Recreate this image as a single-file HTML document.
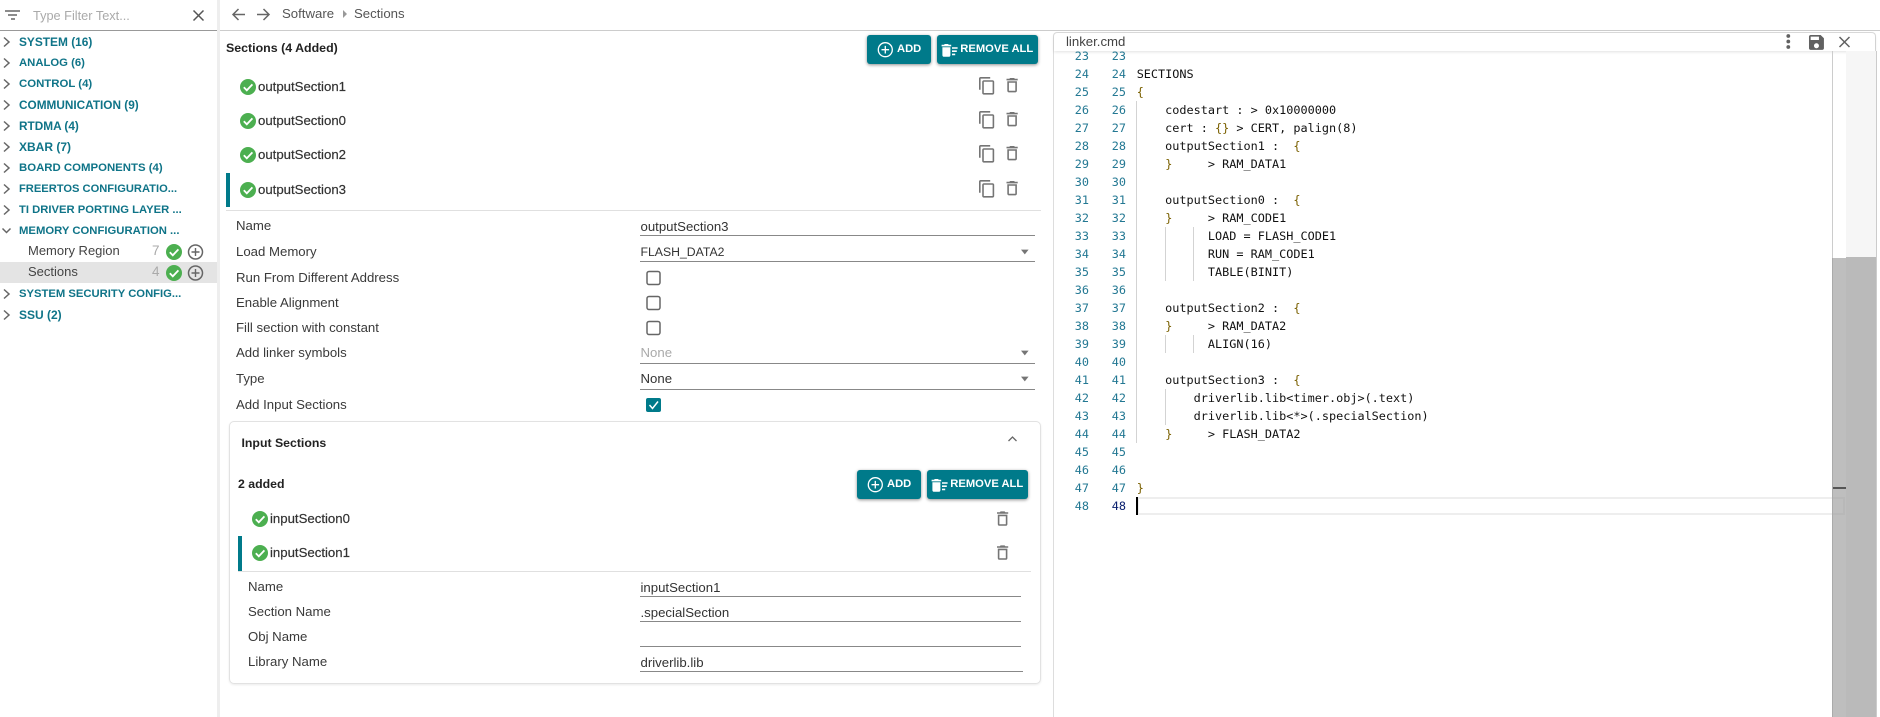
<!DOCTYPE html>
<html><head><meta charset="utf-8"><title>Sections</title>
<style>
html,body{margin:0;padding:0;width:1880px;height:717px;overflow:hidden;background:#fff;font-family:"Liberation Sans",sans-serif;color:#333}
#w{position:relative;width:1880px;height:717px;overflow:hidden}
.a{position:absolute}
.t{position:absolute;line-height:20px;height:20px;white-space:pre;font-size:13px}
.tr{font-size:11.4px;font-weight:bold;color:#0f7488;left:19px}
.lb{font-size:13.2px;color:#3a3a3a}
.v{font-size:13.2px;color:#333}
.n{font-size:13.2px;color:#333;-webkit-text-stroke:.2px #333}
.b{font-weight:bold;color:#222}
.ul{position:absolute;height:1px;background:#888}
.btn{position:absolute;height:29px;background:#007a8a;border-radius:3px;box-shadow:0 1px 3px rgba(0,0,0,.45)}
.bt{position:absolute;color:#fff;font-weight:bold;font-size:11.2px;line-height:20px;white-space:pre}
pre{margin:0;position:absolute;font-family:"DejaVu Sans Mono","Liberation Mono",monospace;font-size:11.83px;line-height:18px}
i{font-style:normal;color:#7a6000}
</style></head><body>
<div id="w">

<!-- structure -->
<div class="a" style="left:217px;top:0;width:3px;height:717px;background:#eee"></div>
<div class="a" style="left:0;top:30px;width:217px;height:1px;background:#999"></div>
<div class="a" style="left:220px;top:30px;width:1660px;height:1px;background:#ccc"></div>
<div class="a" style="left:0;top:262px;width:217px;height:21px;background:#e4e4e4"></div>

<!-- code panel -->
<div class="a" style="left:1053px;top:32px;width:823px;height:685px;border:1px solid #ddd;border-bottom:0;border-radius:4px 4px 0 0;box-sizing:border-box"></div>
<div class="a" style="left:1054px;top:33px;width:821px;height:18px;background:#fff;box-shadow:0 1px 3px rgba(0,0,0,.12);border-radius:4px 4px 0 0"></div>
<div class="a" style="left:1137px;top:497px;width:708px;height:18px;border:2px solid #eee;box-sizing:border-box"></div>
<div class="a" style="left:1136px;top:497px;width:2px;height:18px;background:#000"></div>
<div class="a" style="left:1136px;top:101px;width:1px;height:342px;background:#d3d3d3"></div>
<div class="a" style="left:1165px;top:227px;width:1px;height:54px;background:#d3d3d3"></div>
<div class="a" style="left:1193px;top:227px;width:1px;height:54px;background:#d3d3d3"></div>
<div class="a" style="left:1165px;top:335px;width:1px;height:18px;background:#d3d3d3"></div>
<div class="a" style="left:1193px;top:335px;width:1px;height:18px;background:#d3d3d3"></div>
<div class="a" style="left:1165px;top:389px;width:1px;height:36px;background:#d3d3d3"></div>
<div class="a" style="left:1832px;top:51px;width:1px;height:666px;background:#ccc"></div>
<div class="a" style="left:1846px;top:51px;width:30px;height:206px;background:#f6f6f6"></div>
<div class="a" style="left:1832px;top:258px;width:14px;height:459px;background:rgba(150,150,150,.62);border-left:1px solid #aaa;box-sizing:border-box"></div>
<div class="a" style="left:1846px;top:257px;width:30px;height:460px;background:#bababa"></div>
<div class="a" style="left:1876px;top:51px;width:1px;height:666px;background:#ccc"></div>
<div class="a" style="left:1833px;top:487px;width:13px;height:2px;background:#555"></div>

<pre style="left:1060px;top:47px;width:29px;text-align:right;color:#237893">23
24
25
26
27
28
29
30
31
32
33
34
35
36
37
38
39
40
41
42
43
44
45
46
47
48</pre>
<pre style="left:1097px;top:47px;width:29px;text-align:right;color:#237893">23
24
25
26
27
28
29
30
31
32
33
34
35
36
37
38
39
40
41
42
43
44
45
46
47
<span style="color:#0b216f">48</span></pre>
<pre style="left:1136.7px;top:47px;color:#111">

SECTIONS
<i>{</i>
    codestart : &gt; 0x10000000
    cert : <i>{}</i> &gt; CERT, palign(8)
    outputSection1 :  <i>{</i>
    <i>}</i>     &gt; RAM_DATA1

    outputSection0 :  <i>{</i>
    <i>}</i>     &gt; RAM_CODE1
          LOAD = FLASH_CODE1
          RUN = RAM_CODE1
          TABLE(BINIT)

    outputSection2 :  <i>{</i>
    <i>}</i>     &gt; RAM_DATA2
          ALIGN(16)

    outputSection3 :  <i>{</i>
        driverlib.lib&lt;timer.obj&gt;(.text)
        driverlib.lib&lt;*&gt;(.specialSection)
    <i>}</i>     &gt; FLASH_DATA2


<i>}</i></pre>
<div class="t" style="left:1066px;top:32px;font-size:13.2px;color:#444">linker.cmd</div>

<!-- input box -->
<div class="a" style="left:229px;top:421px;width:812px;height:263px;border:1px solid #e2e2e2;border-radius:5px;box-sizing:border-box;box-shadow:0 1px 2px rgba(0,0,0,.08)"></div>

<!-- buttons -->
<div class="btn" style="left:867px;top:35px;width:64px"></div>
<div class="btn" style="left:937px;top:35px;width:101px"></div>
<div class="btn" style="left:857px;top:470px;width:64px"></div>
<div class="btn" style="left:927px;top:470px;width:101px"></div>
<div class="bt" style="left:897px;top:39px">ADD</div>
<div class="bt" style="left:960.3px;top:39px">REMOVE ALL</div>
<div class="bt" style="left:887px;top:474px">ADD</div>
<div class="bt" style="left:950.3px;top:474px">REMOVE ALL</div>

<!-- selected bars and dividers -->
<div class="a" style="left:226px;top:173px;width:4px;height:34px;background:#007a8a"></div>
<div class="a" style="left:226px;top:210px;width:815px;height:1px;background:#e0e0e0"></div>
<div class="a" style="left:238px;top:536px;width:4px;height:35px;background:#007a8a"></div>
<div class="a" style="left:238px;top:571px;width:793px;height:1px;background:#e0e0e0"></div>

<!-- underlines -->
<div class="ul" style="left:640px;top:235px;width:395px"></div>
<div class="ul" style="left:640px;top:261px;width:395px"></div>
<div class="ul" style="left:640px;top:363px;width:395px"></div>
<div class="ul" style="left:640px;top:389px;width:395px"></div>
<div class="ul" style="left:640px;top:596px;width:381px"></div>
<div class="ul" style="left:640px;top:621px;width:381px"></div>
<div class="ul" style="left:640px;top:646px;width:381px"></div>
<div class="ul" style="left:640px;top:671px;width:383px"></div>

<!-- icons -->
<svg class="a" style="left:0;top:0" width="1880" height="717" viewBox="0 0 1880 717">
<defs>
<g id="ck"><circle r="8" fill="#4caf50"/><path d="M-4.2 .3L-1.2 3.3L4.4 -2.6" fill="none" stroke="#fff" stroke-width="1.8"/></g>
<g id="pl"><circle r="7" fill="none" stroke="#666" stroke-width="1.5"/><path d="M-4 0H4M0 -4V4" stroke="#666" stroke-width="1.4"/></g>
<g id="wp"><circle r="7" fill="none" stroke="#fff" stroke-width="1.3"/><path d="M-3.8 0H3.8M0 -3.8V3.8" stroke="#fff" stroke-width="1.3"/></g>
<path id="cp" transform="scale(.8)" fill="#757575" d="M16 1H4c-1.1 0-2 .9-2 2v14h2V3h12V1zm3 4H8c-1.1 0-2 .9-2 2v14c0 1.1.9 2 2 2h11c1.1 0 2-.9 2-2V7c0-1.1-.9-2-2-2zm0 16H8V7h11v14z"/>
<path id="tr" transform="scale(.8)" fill="#757575" d="M6 19c0 1.1.9 2 2 2h8c1.1 0 2-.9 2-2V7H6v12zM8 9h8v10H8V9zm7.5-5l-1-1h-5l-1 1H5v2h14V4h-3.5z"/>
<path id="ds" transform="scale(.8)" fill="#fff" d="M15 16h4v2h-4zm0-8h7v2h-7zm0 4h6v2h-6zM3 18c0 1.1.9 2 2 2h6c1.1 0 2-.9 2-2V8H3v10zM14 5h-3l-1-1H6L5 5H2v2h12z"/>
<path id="cv" d="M-2.5 -4.5L2.5 0L-2.5 4.5" fill="none" stroke="#666" stroke-width="1.5"/>
<path id="dn" d="M0 -2.5L8 -2.5L4 2.5Z" fill="#757575" transform="translate(-4,0) scale(.95)"/>
</defs>
<!-- filter -->
<path d="M5 11H20M8 15H17M11 19H15" stroke="#666" stroke-width="1.4"/>
<path d="M193.5 10.5L203.5 20.5M203.5 10.5L193.5 20.5" stroke="#555" stroke-width="1.5"/>
<!-- nav -->
<path d="M245 14.5H233M238.5 9L233 14.5L238.5 20" fill="none" stroke="#666" stroke-width="1.5"/>
<path d="M257 14.5H269M263.5 9L269 14.5L263.5 20" fill="none" stroke="#666" stroke-width="1.5"/>
<path d="M343 10L347 14L343 18Z" fill="#999"/>
<!-- tree chevrons -->
<use href="#cv" x="6.5" y="42"/><use href="#cv" x="6.5" y="63"/><use href="#cv" x="6.5" y="84"/><use href="#cv" x="6.5" y="105"/><use href="#cv" x="6.5" y="126"/><use href="#cv" x="6.5" y="147"/><use href="#cv" x="6.5" y="168"/><use href="#cv" x="6.5" y="189"/><use href="#cv" x="6.5" y="210"/>
<path d="M2.5 228.5L6.5 232.5L10.5 228.5" fill="none" stroke="#666" stroke-width="1.5"/>
<use href="#cv" x="6.5" y="294"/><use href="#cv" x="6.5" y="315"/>
<use href="#ck" x="174" y="252"/><use href="#pl" x="195.5" y="252"/>
<use href="#ck" x="174" y="273"/><use href="#pl" x="195.5" y="273"/>
<!-- list checks -->
<use href="#ck" x="248" y="87"/><use href="#ck" x="248" y="121"/><use href="#ck" x="248" y="155"/><use href="#ck" x="248" y="190"/>
<use href="#ck" x="260" y="519"/><use href="#ck" x="260" y="553"/>
<!-- copy/trash -->
<use href="#cp" x="977.4" y="76.2"/><use href="#cp" x="977.4" y="110.2"/><use href="#cp" x="977.4" y="144.2"/><use href="#cp" x="977.4" y="179.2"/>
<use href="#tr" x="1002.5" y="75.6"/><use href="#tr" x="1002.5" y="109.6"/><use href="#tr" x="1002.5" y="143.6"/><use href="#tr" x="1002.5" y="178.6"/>
<use href="#tr" x="993" y="509"/><use href="#tr" x="993" y="543"/>
<!-- button icons -->
<use href="#wp" x="885.3" y="49.7"/><use href="#ds" x="940" y="40.8"/>
<use href="#wp" x="875.3" y="484.7"/><use href="#ds" x="930" y="475.8"/>
<!-- dropdown arrows -->
<use href="#dn" x="1025" y="252"/><use href="#dn" x="1025" y="353"/><use href="#dn" x="1025" y="379"/>
<!-- checkboxes -->
<rect x="647" y="271.5" width="13" height="13" rx="2" fill="#fff" stroke="#666" stroke-width="1.5"/>
<rect x="647" y="296.5" width="13" height="13" rx="2" fill="#fff" stroke="#666" stroke-width="1.5"/>
<rect x="647" y="321.5" width="13" height="13" rx="2" fill="#fff" stroke="#666" stroke-width="1.5"/>
<rect x="646" y="398" width="15" height="14" rx="2" fill="#007a8a"/>
<path d="M649.5 405L652.5 408.5L658 401.5" fill="none" stroke="#fff" stroke-width="1.5"/>
<!-- chevron up -->
<path d="M1008.5 441L1012.5 437L1016.5 441" fill="none" stroke="#666" stroke-width="1.3"/>
<!-- toolbar icons -->
<circle cx="1788.3" cy="36" r="1.9" fill="#616161"/><circle cx="1788.3" cy="41.5" r="1.9" fill="#616161"/><circle cx="1788.3" cy="47" r="1.9" fill="#616161"/>
<path transform="translate(1806.5 32.5) scale(.83)" fill="#616161" d="M17 3H5c-1.11 0-2 .9-2 2v14c0 1.1.89 2 2 2h14c1.1 0 2-.9 2-2V7l-4-4zm-5 16c-1.66 0-3-1.34-3-3s1.34-3 3-3 3 1.34 3 3-1.34 3-3 3zm3-10H5V5h10v4z"/>
<path d="M1839.5 37L1849.5 47M1849.5 37L1839.5 47" stroke="#616161" stroke-width="1.5"/>
</svg>

<!-- top bar text -->
<div class="t" style="left:33px;top:5.5px;font-size:12.75px;color:#aaa">Type Filter Text...</div>
<div class="t" style="left:282px;top:3.5px;font-size:13.2px;color:#555">Software</div>
<div class="t" style="left:354px;top:3.5px;font-size:13.2px;color:#555">Sections</div>

<!-- tree -->
<div class="t tr" style="top:32px;font-size:11.9px">SYSTEM (16)</div>
<div class="t tr" style="top:53px;font-size:11.3px">ANALOG (6)</div>
<div class="t tr" style="top:74px;font-size:11.4px">CONTROL (4)</div>
<div class="t tr" style="top:95px;font-size:11.8px">COMMUNICATION (9)</div>
<div class="t tr" style="top:116px;font-size:11.8px">RTDMA (4)</div>
<div class="t tr" style="top:137px;font-size:12px">XBAR (7)</div>
<div class="t tr" style="top:158px;font-size:11.4px">BOARD COMPONENTS (4)</div>
<div class="t tr" style="top:179px;font-size:11.15px">FREERTOS CONFIGURATIO...</div>
<div class="t tr" style="top:200px;font-size:11.25px">TI DRIVER PORTING LAYER ...</div>
<div class="t tr" style="top:221px;font-size:11.3px">MEMORY CONFIGURATION ...</div>
<div class="t" style="left:28px;top:241px;color:#444">Memory Region</div>
<div class="t" style="left:152px;top:241px;color:#aaa;font-size:13.5px">7</div>
<div class="t" style="left:28px;top:262px;color:#444">Sections</div>
<div class="t" style="left:152px;top:262px;color:#aaa;font-size:13.5px">4</div>
<div class="t tr" style="top:284px;font-size:11.25px">SYSTEM SECURITY CONFIG...</div>
<div class="t tr" style="top:305px;font-size:12px">SSU (2)</div>

<!-- main -->
<div class="t b" style="left:226px;top:38px;font-size:12.4px">Sections (4 Added)</div>
<div class="t n" style="left:258px;top:77px">outputSection1</div>
<div class="t n" style="left:258px;top:111px">outputSection0</div>
<div class="t n" style="left:258px;top:145px">outputSection2</div>
<div class="t n" style="left:258px;top:180px">outputSection3</div>

<div class="t lb" style="left:236px;top:216px">Name</div>
<div class="t lb" style="left:236px;top:242px">Load Memory</div>
<div class="t lb" style="left:236px;top:268px">Run From Different Address</div>
<div class="t lb" style="left:236px;top:293px">Enable Alignment</div>
<div class="t lb" style="left:236px;top:318px">Fill section with constant</div>
<div class="t lb" style="left:236px;top:343px">Add linker symbols</div>
<div class="t lb" style="left:236px;top:369px">Type</div>
<div class="t lb" style="left:236px;top:395px">Add Input Sections</div>

<div class="t v" style="left:640.5px;top:217px">outputSection3</div>
<div class="t v" style="left:640.5px;top:242px;font-size:12.25px">FLASH_DATA2</div>
<div class="t v" style="left:640.5px;top:343px;color:#aaa">None</div>
<div class="t v" style="left:640.5px;top:369px">None</div>

<div class="t b" style="left:241.5px;top:433px;font-size:12.3px">Input Sections</div>
<div class="t b" style="left:238px;top:474px;font-size:12.3px">2 added</div>
<div class="t n" style="left:270px;top:509px">inputSection0</div>
<div class="t n" style="left:270px;top:543px">inputSection1</div>

<div class="t lb" style="left:248px;top:577px">Name</div>
<div class="t lb" style="left:248px;top:602px">Section Name</div>
<div class="t lb" style="left:248px;top:627px">Obj Name</div>
<div class="t lb" style="left:248px;top:652px">Library Name</div>
<div class="t v" style="left:640.5px;top:578px">inputSection1</div>
<div class="t v" style="left:640.5px;top:603px">.specialSection</div>
<div class="t v" style="left:640.5px;top:653px">driverlib.lib</div>

</div>
</body></html>
